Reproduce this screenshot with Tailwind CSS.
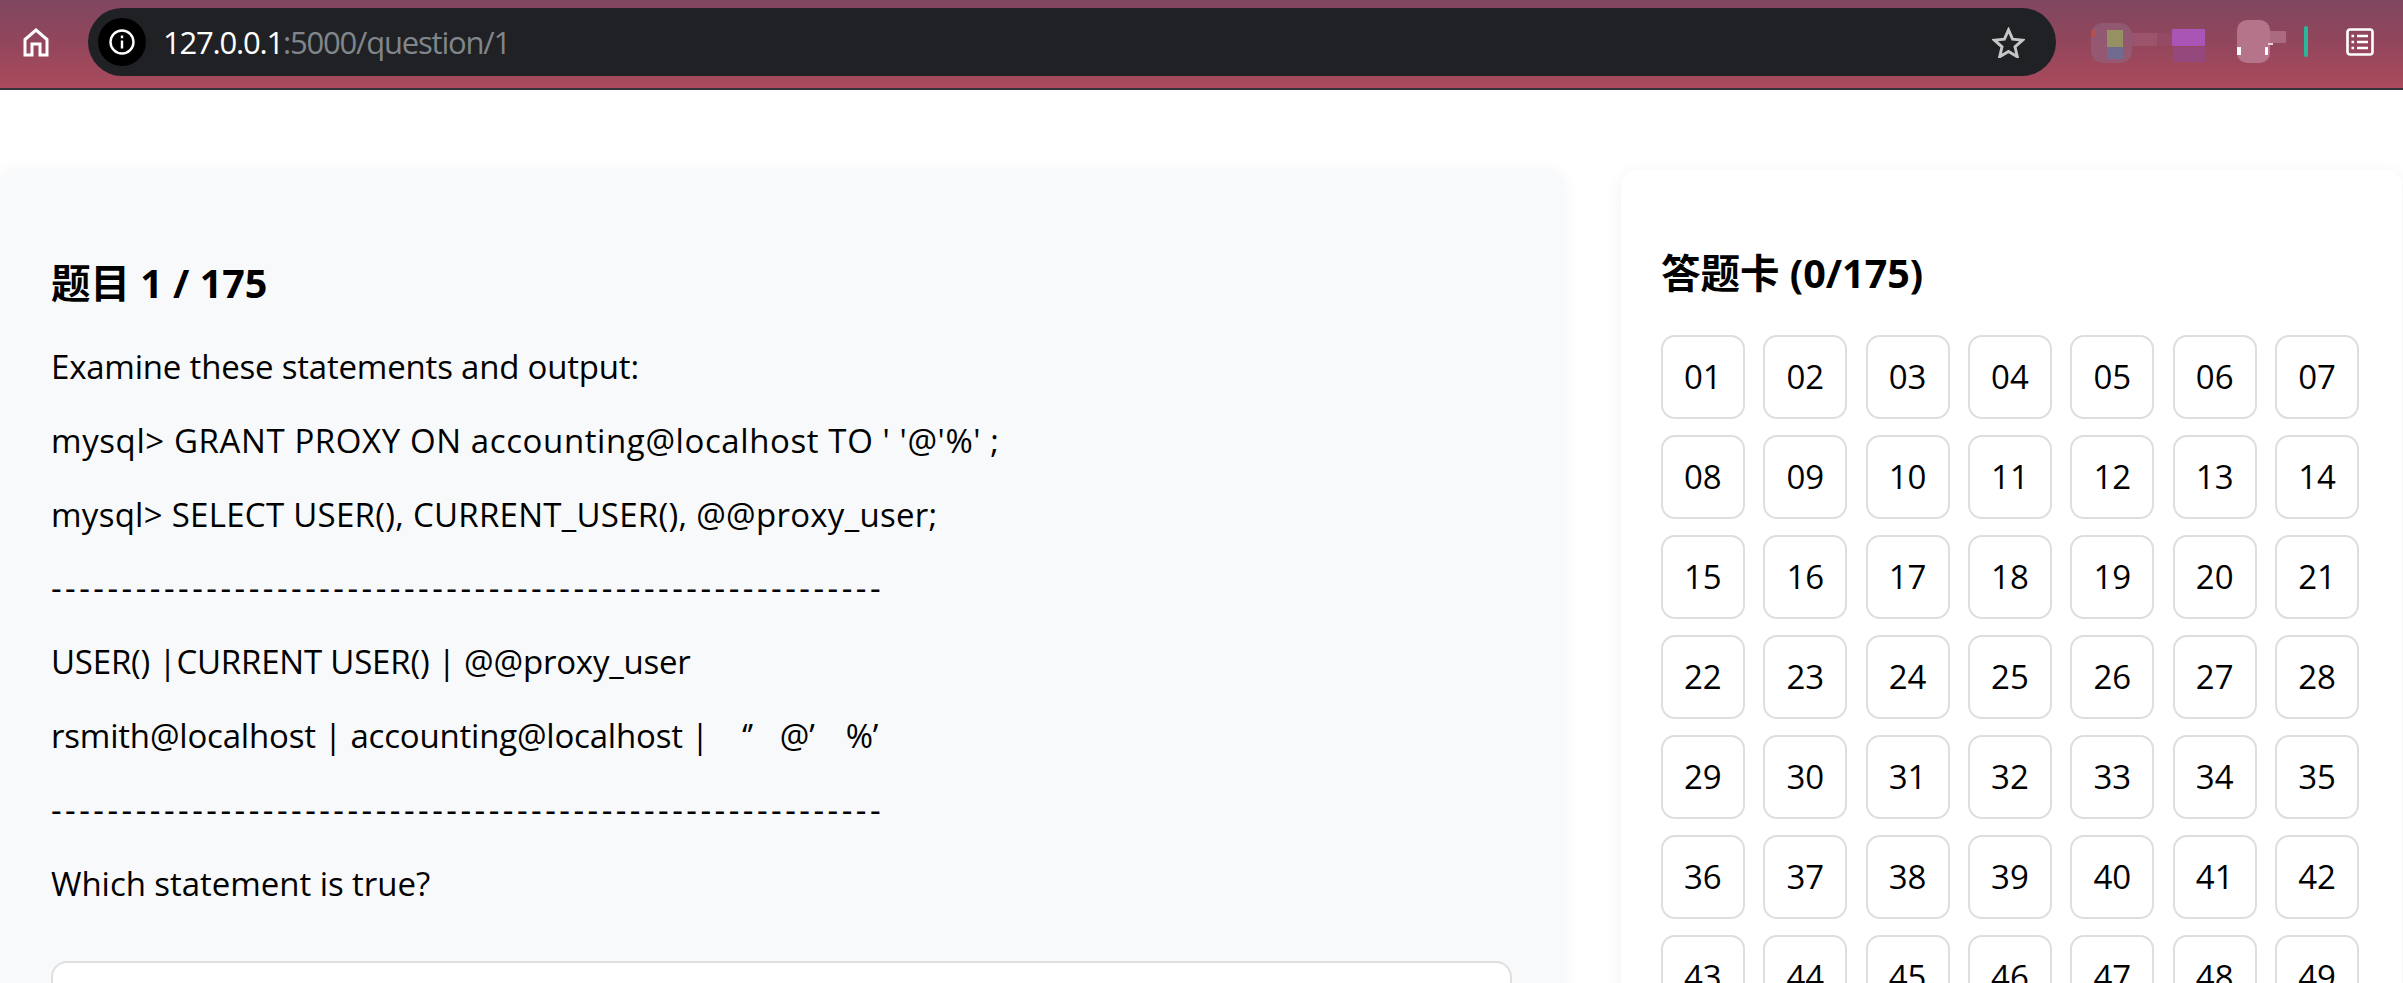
<!DOCTYPE html>
<html lang="zh">
<head>
<meta charset="utf-8">
<title>题目 1 / 175</title>
<script src="https://cdn.jsdelivr.net/npm/@tailwindcss/browser@4"></script>
</head>
<body class="h-[983px] overflow-hidden bg-white text-black font-['Open_Sans','Noto_Sans','Noto_Sans_CJK_SC',sans-serif]">
<header class="h-[90px] flex items-center pb-[4px] border-b-2 border-[#35323a] bg-gradient-to-b from-[#7f4760] via-[#93465c] to-[#ab4a5c]">
  <div class="w-[88px] pr-[16px] flex justify-center shrink-0">
    <svg width="26" height="29" viewBox="0 0 26 29" fill="none" stroke="#fff" stroke-width="3"><path d="M2 27V11.5L13 2l11 9.5V27h-7V16H9v11z"/></svg>
  </div>
  <div class="w-[1968px] h-[68px] rounded-full bg-[#202124] flex items-center pl-[10px] pr-[31px] shrink-0">
    <div class="w-[48px] h-[48px] rounded-full bg-black flex items-center justify-center shrink-0">
      <svg width="28" height="28" viewBox="0 0 28 28" fill="none" stroke="#fff" stroke-width="2.4"><circle cx="14" cy="14" r="11.5"/><path d="M14 12.5v8M14 7.5v2.8"/></svg>
    </div>
    <div class="ml-[17px] text-[31px] tracking-[-1.2px] flex-1 font-['Open_Sans',sans-serif]"><span class="text-white">127.0.0.1</span><span class="text-[#80868b]">:5000/question/1</span></div>
    <svg width="33" height="31" viewBox="0 0 34 32" fill="none" stroke="#c4c7c5" stroke-width="3"><path d="M17 3l4.2 9.6 10.3 1-7.8 6.9 2.4 10.2L17 25.3l-9.1 5.4 2.4-10.2-7.8-6.9 10.3-1z"/></svg>
  </div>
  <div class="relative flex-1 self-stretch -mb-[4px]">
    <div class="absolute left-[35px] top-[23px] w-[41px] h-[40px] rounded-[12px] bg-[#94607a]/70"></div>
    <div class="absolute left-[35px] top-[30px] w-[5px] h-[7px] bg-[#b5504f]"></div>
    <div class="absolute left-[51px] top-[30px] w-[16px] h-[17px] bg-[#96a060]/80"></div>
    <div class="absolute left-[51px] top-[47px] w-[16px] h-[12px] bg-[#66709a]/80"></div>
    <div class="absolute left-[76px] top-[33px] w-[25px] h-[13px] bg-[#a05a72]/70"></div>
    <div class="absolute left-[101px] top-[33px] w-[15px] h-[13px] bg-[#964a68]/70"></div>
    <div class="absolute left-[116px] top-[29px] w-[33px] h-[17px] bg-[#a855b5]"></div>
    <div class="absolute left-[117px] top-[47px] w-[32px] h-[15px] bg-[#94487c]"></div>
    <div class="absolute left-[181px] top-[20px] w-[33px] h-[43px] rounded-[10px] bg-[#b5748a]"></div>
    <div class="absolute left-[214px] top-[31px] w-[16px] h-[12px] bg-[#ab6a80]"></div>
    <div class="absolute left-[181px] top-[47px] w-[4px] h-[8px] bg-white"></div>
    <div class="absolute left-[209px] top-[47px] w-[3px] h-[8px] bg-white"></div>
    <div class="absolute left-[212px] top-[43px] w-[5px] h-[2px] bg-[#e8d0d8]"></div>
    <div class="absolute left-[248px] top-[26px] w-[4px] h-[31px] rounded-sm bg-[#2bb59a]"></div>
    <svg class="absolute left-[290px] top-[28px]" width="28" height="28" viewBox="0 0 28 28" fill="none" stroke="#fff" stroke-width="2.6"><rect x="1.5" y="1.5" width="25" height="25" rx="2.5"/><path d="M11 8h11M11 14h11M11 20h11"/><path d="M5.5 8h2.6M5.5 14h2.6M5.5 20h2.6"/></svg>
  </div>
</header>
<main class="flex items-start pt-[78px]">
  <section class="w-[1563px] h-[900px] shrink-0 rounded-[16px] bg-[#f8f9fa] shadow-[0_4px_20px_rgba(0,0,0,0.05)] px-[51px] pt-[90px]">
    <h2 class="text-[39.5px] leading-[50px] font-bold">题目 1 / 175</h2>
    <div class="mt-[34px] text-[33px] leading-[49px] flex flex-col gap-[24.8px]">
      <p class="tracking-[-0.2px]">Examine these statements and output:</p>
      <p class="tracking-[0.6px]">mysql&gt; GRANT PROXY ON accounting@localhost TO ' '@'%' ;</p>
      <p class="tracking-[0.28px]">mysql&gt; SELECT USER(), CURRENT_USER(), @@proxy_user;</p>
      <p class="tracking-[3.5px]">-----------------------------------------------------------</p>
      <p class="tracking-[-0.2px]">USER() |CURRENT USER() | @@proxy_user</p>
      <p class="tracking-[-0.2px]">rsmith@localhost | accounting@localhost |<span class="ml-[33px]">‘’</span><span class="ml-[27px]">@’</span><span class="ml-[31px]">%’</span></p>
      <p class="tracking-[3.5px]">-----------------------------------------------------------</p>
      <p class="tracking-[-0.05px]">Which statement is true?</p>
    </div>
    <div class="mt-[53px] h-[200px] rounded-[16px] border-2 border-[#dedede] bg-white"></div>
  </section>
  <aside class="ml-[58px] mt-[2px] w-[781px] h-[900px] shrink-0 rounded-[16px] bg-white shadow-[0_4px_20px_rgba(0,0,0,0.06)] pl-[40px] pr-[43px] pt-[78px]">
    <h2 class="text-[39.5px] leading-[50px] font-bold">答题卡 (0/175)</h2>
    <div class="mt-[37px] grid grid-cols-7 gap-x-[18.6px] gap-y-[16px] text-[33px]">
      <div class="h-[84px] rounded-[14px] border-2 border-[#dedede] flex items-center justify-center">01</div>
      <div class="h-[84px] rounded-[14px] border-2 border-[#dedede] flex items-center justify-center">02</div>
      <div class="h-[84px] rounded-[14px] border-2 border-[#dedede] flex items-center justify-center">03</div>
      <div class="h-[84px] rounded-[14px] border-2 border-[#dedede] flex items-center justify-center">04</div>
      <div class="h-[84px] rounded-[14px] border-2 border-[#dedede] flex items-center justify-center">05</div>
      <div class="h-[84px] rounded-[14px] border-2 border-[#dedede] flex items-center justify-center">06</div>
      <div class="h-[84px] rounded-[14px] border-2 border-[#dedede] flex items-center justify-center">07</div>
      <div class="h-[84px] rounded-[14px] border-2 border-[#dedede] flex items-center justify-center">08</div>
      <div class="h-[84px] rounded-[14px] border-2 border-[#dedede] flex items-center justify-center">09</div>
      <div class="h-[84px] rounded-[14px] border-2 border-[#dedede] flex items-center justify-center">10</div>
      <div class="h-[84px] rounded-[14px] border-2 border-[#dedede] flex items-center justify-center">11</div>
      <div class="h-[84px] rounded-[14px] border-2 border-[#dedede] flex items-center justify-center">12</div>
      <div class="h-[84px] rounded-[14px] border-2 border-[#dedede] flex items-center justify-center">13</div>
      <div class="h-[84px] rounded-[14px] border-2 border-[#dedede] flex items-center justify-center">14</div>
      <div class="h-[84px] rounded-[14px] border-2 border-[#dedede] flex items-center justify-center">15</div>
      <div class="h-[84px] rounded-[14px] border-2 border-[#dedede] flex items-center justify-center">16</div>
      <div class="h-[84px] rounded-[14px] border-2 border-[#dedede] flex items-center justify-center">17</div>
      <div class="h-[84px] rounded-[14px] border-2 border-[#dedede] flex items-center justify-center">18</div>
      <div class="h-[84px] rounded-[14px] border-2 border-[#dedede] flex items-center justify-center">19</div>
      <div class="h-[84px] rounded-[14px] border-2 border-[#dedede] flex items-center justify-center">20</div>
      <div class="h-[84px] rounded-[14px] border-2 border-[#dedede] flex items-center justify-center">21</div>
      <div class="h-[84px] rounded-[14px] border-2 border-[#dedede] flex items-center justify-center">22</div>
      <div class="h-[84px] rounded-[14px] border-2 border-[#dedede] flex items-center justify-center">23</div>
      <div class="h-[84px] rounded-[14px] border-2 border-[#dedede] flex items-center justify-center">24</div>
      <div class="h-[84px] rounded-[14px] border-2 border-[#dedede] flex items-center justify-center">25</div>
      <div class="h-[84px] rounded-[14px] border-2 border-[#dedede] flex items-center justify-center">26</div>
      <div class="h-[84px] rounded-[14px] border-2 border-[#dedede] flex items-center justify-center">27</div>
      <div class="h-[84px] rounded-[14px] border-2 border-[#dedede] flex items-center justify-center">28</div>
      <div class="h-[84px] rounded-[14px] border-2 border-[#dedede] flex items-center justify-center">29</div>
      <div class="h-[84px] rounded-[14px] border-2 border-[#dedede] flex items-center justify-center">30</div>
      <div class="h-[84px] rounded-[14px] border-2 border-[#dedede] flex items-center justify-center">31</div>
      <div class="h-[84px] rounded-[14px] border-2 border-[#dedede] flex items-center justify-center">32</div>
      <div class="h-[84px] rounded-[14px] border-2 border-[#dedede] flex items-center justify-center">33</div>
      <div class="h-[84px] rounded-[14px] border-2 border-[#dedede] flex items-center justify-center">34</div>
      <div class="h-[84px] rounded-[14px] border-2 border-[#dedede] flex items-center justify-center">35</div>
      <div class="h-[84px] rounded-[14px] border-2 border-[#dedede] flex items-center justify-center">36</div>
      <div class="h-[84px] rounded-[14px] border-2 border-[#dedede] flex items-center justify-center">37</div>
      <div class="h-[84px] rounded-[14px] border-2 border-[#dedede] flex items-center justify-center">38</div>
      <div class="h-[84px] rounded-[14px] border-2 border-[#dedede] flex items-center justify-center">39</div>
      <div class="h-[84px] rounded-[14px] border-2 border-[#dedede] flex items-center justify-center">40</div>
      <div class="h-[84px] rounded-[14px] border-2 border-[#dedede] flex items-center justify-center">41</div>
      <div class="h-[84px] rounded-[14px] border-2 border-[#dedede] flex items-center justify-center">42</div>
      <div class="h-[84px] rounded-[14px] border-2 border-[#dedede] flex items-center justify-center">43</div>
      <div class="h-[84px] rounded-[14px] border-2 border-[#dedede] flex items-center justify-center">44</div>
      <div class="h-[84px] rounded-[14px] border-2 border-[#dedede] flex items-center justify-center">45</div>
      <div class="h-[84px] rounded-[14px] border-2 border-[#dedede] flex items-center justify-center">46</div>
      <div class="h-[84px] rounded-[14px] border-2 border-[#dedede] flex items-center justify-center">47</div>
      <div class="h-[84px] rounded-[14px] border-2 border-[#dedede] flex items-center justify-center">48</div>
      <div class="h-[84px] rounded-[14px] border-2 border-[#dedede] flex items-center justify-center">49</div>
    </div>
  </aside>
</main>
</body>
</html>
